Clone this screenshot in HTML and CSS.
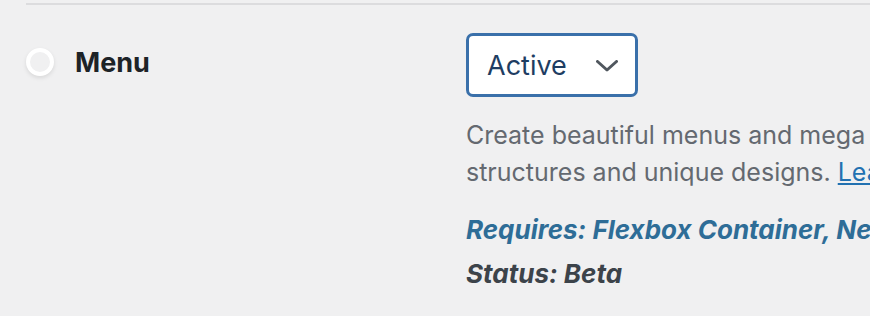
FILE: index.html
```html
<!DOCTYPE html>
<html>
<head>
<meta charset="utf-8">
<link rel="stylesheet" href="styles.css">
</head>
<body>
<div class="page">
  <div class="rule"></div>
  <div class="row">
    <div class="label-col">
      <span class="radio"></span>
      <span class="label">Menu</span>
    </div>
    <div class="field-col">
      <div class="select">
        <span class="select-text">Active</span>
        <svg class="chevron" width="22" height="12" viewBox="0 0 22 12"><polyline points="1.5,1.5 11,10 20.5,1.5" fill="none" stroke="#50575e" stroke-width="3" stroke-linecap="round" stroke-linejoin="round"/></svg>
      </div>
      <p class="desc">
        <span class="line">Create beautiful menus and mega menus with new nested capabilities. Mega menus are ideal for websites with complex navigation</span>
        <span class="line">structures and unique designs. <a href="#" class="link">Learn More</a></span>
      </p>
      <p class="requires">Requires: Flexbox Container, Nested Elements</p>
      <p class="status">Status: Beta</p>
    </div>
  </div>
</div>
</body>
</html>
```

FILE: styles.css
```css
html, body {
  margin: 0;
  padding: 0;
  background: #f0f0f1;
  overflow: hidden;
}
body {
  font-family: Inter, "Noto Sans", sans-serif;
  width: 870px;
  height: 316px;
}
.page {
  padding-left: 26px;
  padding-top: 3px;
}
.rule {
  height: 2px;
  background: #dcdcde;
  width: 1200px;
}
.row {
  display: flex;
  padding-top: 28px;
}
.label-col {
  width: 440px;
  flex: none;
  display: flex;
  align-items: center;
  height: 64px;
  margin-top: -3px;
  align-self: flex-start;
}
.radio {
  box-sizing: border-box;
  width: 28px;
  height: 28px;
  border-radius: 50%;
  border: 4px solid #ffffff;
  background: #f0f0f1;
  box-shadow: 0 2px 4px rgba(0, 0, 0, 0.10);
  margin-right: 21px;
}
.label {
  font-size: 27px;
  font-weight: 700;
  color: #1d2327;
}
.field-col {
  flex: none;
  width: 1200px;
}
.select {
  box-sizing: border-box;
  width: 172px;
  height: 64px;
  border: 3px solid #3a70aa;
  border-radius: 7px;
  background: #ffffff;
  display: flex;
  align-items: center;
  justify-content: space-between;
  padding: 0 17px 0 18px;
}
.select-text {
  font-size: 27px;
  color: #1e3d62;
}
.chevron {
  display: block;
  margin-top: 1px;
}
.desc {
  margin: 20px 0 0;
  font-size: 25px;
  line-height: 37px;
  color: #646970;
}
.line {
  display: block;
  white-space: nowrap;
}
.link {
  color: #2271b1;
  text-decoration: underline;
}
.requires {
  margin: 20px 0 0;
  font-size: 26px;
  line-height: 38px;
  font-weight: 700;
  font-style: italic;
  color: #2e6d97;
  white-space: nowrap;
}
.status {
  margin: 6px 0 0;
  font-size: 26px;
  line-height: 38px;
  font-weight: 700;
  font-style: italic;
  color: #3c434a;
  white-space: nowrap;
}
```
